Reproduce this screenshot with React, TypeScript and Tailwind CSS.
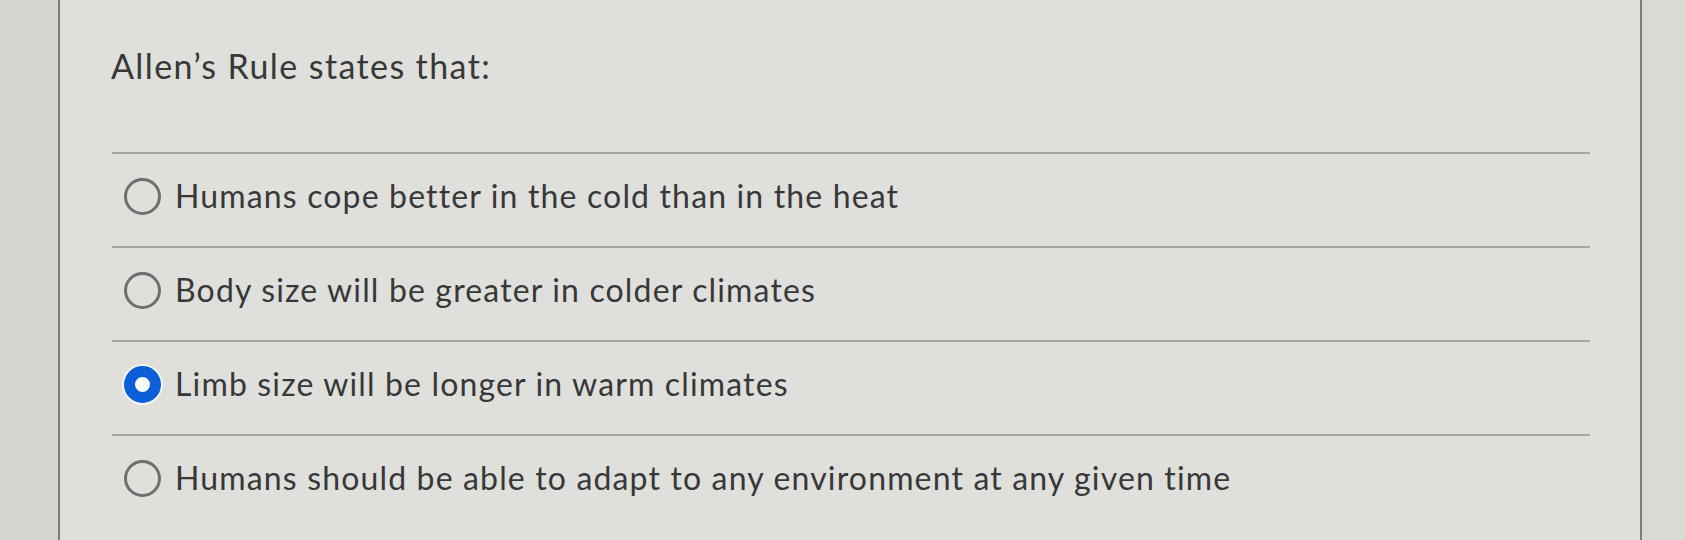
const options = [
  'Humans cope better in the cold than in the heat',
  'Body size will be greater in colder climates',
  'Limb size will be longer in warm climates',
  'Humans should be able to adapt to any environment at any given time',
];

function Radio({ checked }: { checked: boolean }) {
  if (checked) {
    return (
      <span className="flex h-[37px] w-[37px] shrink-0 items-center justify-center rounded-full border-[11px] border-[#0c5fd9] bg-white shadow-[0_0_0_2px_rgba(255,255,255,0.7)]" />
    );
  }
  return <span className="h-[37px] w-[37px] shrink-0 rounded-full border-[3px] border-[#6f6f6d] bg-transparent" />;
}

export default function App() {
  const selected = 2;

  return (
    <div className="flex h-[540px] w-full bg-[#d8d8d5] font-['Lato','Liberation_Sans',sans-serif] text-[#383838]">
      <div className="w-[58px] shrink-0 bg-[#d6d6d3]" />

      <div className="flex w-[1584px] shrink-0 flex-col border-x-2 border-[#7d7d7b] bg-[#dfdfdc]">
        <div className="flex h-[152px] items-start pl-[51px] pt-[46px]">
          <h1 className="text-[34px] leading-[40px] tracking-[1.4px]">Allen’s Rule states that:</h1>
        </div>

        <div className="ml-[52px] w-[1478px]">
          {options.map((label, i) => (
            <label
              key={label}
              className="flex h-[94px] items-center gap-[14px] border-t-2 border-[#a6a6a3] pb-[8px] pl-[12px]"
            >
              <Radio checked={i === selected} />
              <span className="text-[32px] leading-[38px] tracking-[1.15px]">{label}</span>
            </label>
          ))}
        </div>
      </div>

      <div className="flex-1 bg-[#d9d9d6]" />
    </div>
  );
}
